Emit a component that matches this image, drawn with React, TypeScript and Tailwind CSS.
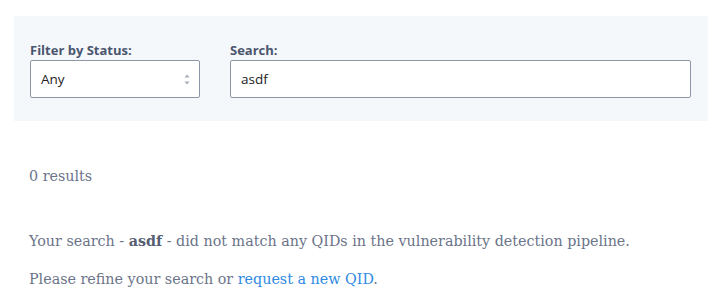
export default function App() {
  return (
    <div className="min-h-screen bg-white pt-4 pl-[14px] pr-3">
      <section className="flex h-[105px] w-[694px] gap-[30px] bg-[#f5f8fb] pl-4 pr-[17px] pt-[26px]">
        <div className="flex w-[170px] flex-col">
          <label className="mb-[2px] text-[13px] font-bold leading-4 text-[#4a566e] [font-family:'Open_Sans',sans-serif]">
            Filter by Status:
          </label>
          <div className="relative flex h-[38px] items-center rounded-[2px] border border-[#8f97a6] bg-white pl-[10px]">
            <span className="text-[13.5px] text-[#222] [font-family:'Open_Sans',sans-serif]">Any</span>
            <svg
              className="absolute right-[9px] top-[13px]"
              width="6"
              height="11"
              viewBox="0 0 6 11"
              fill="#a5acb8"
            >
              <path d="M3 0.5 L5.5 3.5 H0.5 Z" />
              <path d="M3 10.5 L0.5 7.5 H5.5 Z" />
            </svg>
          </div>
        </div>
        <div className="flex flex-1 flex-col">
          <label className="mb-[2px] text-[13px] font-bold leading-4 text-[#4a566e] [font-family:'Open_Sans',sans-serif]">
            Search:
          </label>
          <div className="flex h-[38px] items-center rounded-[2px] border border-[#8f97a6] bg-white pl-[10px]">
            <span className="text-[13.5px] text-[#222] [font-family:'Open_Sans',sans-serif]">asdf</span>
          </div>
        </div>
      </section>

      <div className="pl-[15px] text-[14.3px] text-[#6b7489] [font-family:'DejaVu_Serif',serif]">
        <p className="mt-[45px] leading-5">0 results</p>
        <p className="mt-[45px] leading-5">
          Your search - <b className="font-bold text-[#555e72]">asdf</b> - did not match any QIDs in the
          vulnerability detection pipeline.
        </p>
        <p className="mt-[18px] leading-5">
          Please refine your search or{" "}
          <a href="#" className="text-[#2f8ae3]">
            request a new QID
          </a>
          .
        </p>
      </div>
    </div>
  );
}
